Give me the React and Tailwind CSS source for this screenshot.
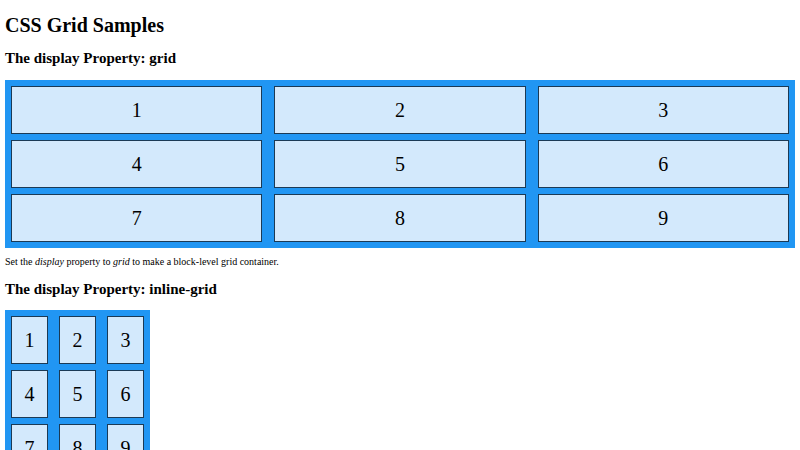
export default function App() {
  const nums = [1, 2, 3, 4, 5, 6, 7, 8, 9];
  return (
    <div className="bg-white w-[800px] h-[450px] overflow-hidden px-[5px] text-black" style={{ fontFamily: '"Liberation Serif", "Times New Roman", serif' }}>
      <h1 className="text-[20px] font-bold leading-[24px] pt-[13px]">CSS Grid Samples</h1>
      <h2 className="text-[15px] font-bold leading-[18px] mt-[12px]">The display Property: grid</h2>
      <div className="grid grid-cols-3 gap-x-[12px] gap-y-[6px] bg-[#2196F3] p-[6px] mt-[13px]">
        {nums.map((n) => (
          <div key={n} className="h-[48px] flex items-center justify-center bg-[#d3e9fc] border border-[#1b3a55] text-[20px]">
            {n}
          </div>
        ))}
      </div>
      <p className="text-[10px] leading-[12px] mt-[8px]">
        Set the <em>display</em> property to <em>grid</em> to make a block-level grid container.
      </p>
      <h2 className="text-[15px] font-bold leading-[18px] mt-[12px]">The display Property: inline-grid</h2>
      <div className="grid w-max grid-cols-[37px_37px_37px] gap-x-[11px] gap-y-[6px] bg-[#2196F3] p-[6px] mt-[12px]">
        {nums.map((n) => (
          <div key={n} className="h-[48px] flex items-center justify-center bg-[#d3e9fc] border border-[#1b3a55] text-[20px]">
            {n}
          </div>
        ))}
      </div>
    </div>
  );
}
